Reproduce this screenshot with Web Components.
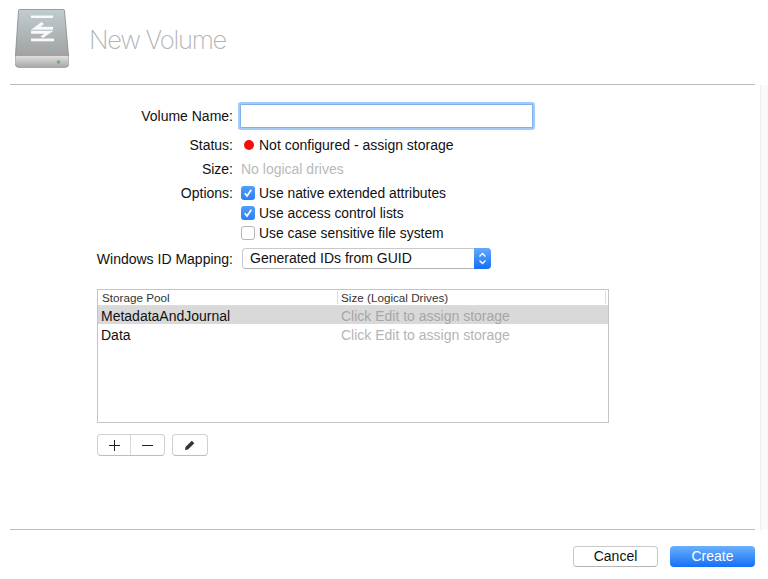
<!DOCTYPE html>
<html>
<head>
<meta charset="utf-8">
<title>New Volume</title>
<style>
  html, body { margin: 0; height: 100%; background: #fff; }
  body { font: 14px/16px "Liberation Sans", Arial, sans-serif; color: #111; overflow: hidden; }
</style>
</head>
<body>
<volume-page>
  <volume-header slot="header">New Volume</volume-header>

  <form-row label="Volume Name:" gap="9"><text-field></text-field></form-row>
  <form-row label="Status:" gap="8"><status-text>Not configured - assign storage</status-text></form-row>
  <form-row label="Size:" gap="8"><span style="color:#b9b9b9;padding-left:1px">No logical drives</span></form-row>
  <form-row label="Options:" gap="4">
    <check-box checked>Use native extended attributes</check-box>
  </form-row>
  <form-row gap="4"><check-box checked>Use access control lists</check-box></form-row>
  <form-row gap="7"><check-box>Use case sensitive file system</check-box></form-row>
  <form-row label="Windows ID Mapping:" gap="20"><popup-button>Generated IDs from GUID</popup-button></form-row>

  <pool-table></pool-table>

  <table-tools></table-tools>

  <dialog-footer slot="footer">
    <push-button>Cancel</push-button>
    <push-button primary>Create</push-button>
  </dialog-footer>
</volume-page>

<script>
function shadow(el, html) {
  el.attachShadow({ mode: 'open' }).innerHTML = html;
}

class VolumePage extends HTMLElement {
  constructor() {
    super();
    shadow(this, `
<style>
  :host { display: flex; flex-direction: column; height: 579px; position: relative; }
  main  { flex: 1; padding-top: 19px; }
  .strip {
    position: absolute; top: 85px; right: 0; width: 7px; height: 445px;
    background: #fafafa; border-left: 1px solid #eee;
  }
</style>
<slot name="header"></slot>
<main><slot></slot></main>
<slot name="footer"></slot>
<div class="strip"></div>`);
  }
}

class VolumeHeader extends HTMLElement {
  constructor() {
    super();
    shadow(this, `
<style>
  :host { display: block; height: 85px; box-sizing: border-box; margin: 0 13px 0 10px; border-bottom: 1px solid #bdbdbd; }
  .wrap { display: flex; align-items: flex-start; padding: 9px 0 0 5px; gap: 20px; }
  svg   { display: block; flex: none; }
  h1    {
    margin: 14px 0 0; font: 200 25.500px/34px Inter, "Liberation Sans", sans-serif;
    letter-spacing: -1.25px; color: #b0b4b7;
  }
</style>
<div class="wrap">
  <svg width="54" height="60" viewBox="15 9 54 60">
    <defs>
      <linearGradient id="body" x1="0" y1="0" x2="0" y2="1">
        <stop offset="0" stop-color="#c0ccd1"/><stop offset="1" stop-color="#a1a1a1"/>
      </linearGradient>
      <linearGradient id="front" x1="0" y1="0" x2="0" y2="1">
        <stop offset="0" stop-color="#e2e2e2"/><stop offset="1" stop-color="#a6a6a6"/>
      </linearGradient>
    </defs>
    <path d="M19.500 9.500H63.500Q64.400 9.500 64.500 10.500L68.600 56.500H15.400L18.500 10.500Q18.600 9.500 19.500 9.500Z" fill="url(#body)" stroke="#85898c" stroke-width=".8"/>
    <path d="M15.200 56Q15.600 55.500 17 55.500H67Q68.400 55.500 68.800 56V63.500Q68.800 67.500 65 67.500H19Q15.200 67.500 15.200 63.500Z" fill="url(#front)" stroke="#8d8d8d" stroke-width=".6"/>
    <rect x="57" y="60.500" width="3" height="3" fill="#62b562"/>
    <g fill="#f7f9fa">
      <rect x="31" y="15.500" width="22" height="2.500"/>
      <rect x="31" y="38.500" width="23" height="2.800"/>
      <path d="M41.500 22 31 29.800H53V26.800H40.500L44 24Z"/>
      <path d="M31 30.800H53.500L43 38 40.500 36.500 44.500 33.800H31Z"/>
    </g>
  </svg>
  <h1><slot></slot></h1>
</div>`);
  }
}

class FormRow extends HTMLElement {
  constructor() {
    super();
    shadow(this, `
<style>
  :host { display: flex; align-items: center; }
  .label { width: 233px; text-align: right; flex: none; white-space: nowrap; }
  .field { margin-left: 7px; display: flex; align-items: center; }
</style>
<div class="label"></div>
<div class="field"><slot></slot></div>`);
  }
  connectedCallback() {
    this.shadowRoot.querySelector('.label').textContent = this.getAttribute('label') || '';
    this.style.marginBottom = (this.getAttribute('gap') || 0) + 'px';
  }
}

class TextField extends HTMLElement {
  constructor() {
    super();
    shadow(this, `
<style>
  :host { display: block; }
  input {
    display: block; width: 293px; height: 24px; box-sizing: border-box; margin: 0;
    border: 1px solid #7fb0ec; border-radius: 1px; outline: none; background: #fff;
    box-shadow: 0 0 0 2px #a3cbf7; font: inherit;
  }
</style>
<input type="text">`);
  }
}

class StatusText extends HTMLElement {
  constructor() {
    super();
    shadow(this, `
<style>
  :host { display: flex; align-items: center; gap: 4px; padding-left: 4px; height: 16px; }
  i { width: 10px; height: 10px; border-radius: 50%; background: #f50d0d; display: block; margin-right: 1px; }
</style>
<i></i><slot></slot>`);
  }
}

class CheckBox extends HTMLElement {
  constructor() {
    super();
    const on = this.hasAttribute('checked');
    shadow(this, `
<style>
  :host { display: flex; align-items: center; gap: 4px; padding-left: 1px; height: 16px; font-size: 13.850px; }
  .box {
    width: 14px; height: 14px; box-sizing: border-box; border-radius: 3px; flex: none;
    ${on ? 'background: linear-gradient(#4f9ffb, #2a80f6); border: 0;'
         : 'background: #fff; border: 1px solid #b5b5b5;'}
  }
  svg { display: block; }
</style>
<div class="box">${on ? `<svg width="14" height="14" viewBox="0 0 14 14"><path d="M3.800 7.200 6 10 10.300 3.800" fill="none" stroke="#fff" stroke-width="1.700"/></svg>` : ''}</div>
<slot></slot>`);
  }
}

class PopupButton extends HTMLElement {
  constructor() {
    super();
    shadow(this, `
<style>
  :host {
    display: flex; width: 249px; height: 21px; box-sizing: border-box; margin-left: 2px;
    border: 1px solid #c9c9c9; border-bottom-color: #b4b4b4; border-right: 0; border-radius: 4px; background: #fff;
  }
  .text  { flex: 1; padding-left: 7px; line-height: 18px; }
  .arrow {
    width: 17px; margin: -1px 0; border-radius: 0 4px 4px 0;
    background: linear-gradient(#64a8fb, #1470f6);
    display: flex; align-items: center; justify-content: center;
  }
</style>
<div class="text"><slot></slot></div>
<div class="arrow">
  <svg width="9" height="15" viewBox="0 0 9 15"><path d="M1.500 5.500 4.500 2.500 7.500 5.500M1.500 9.500 4.500 12.500 7.500 9.500" fill="none" stroke="#fff" stroke-width="1.300"/></svg>
</div>`);
  }
}

class PoolTable extends HTMLElement {
  constructor() {
    super();
    const rows = [['MetadataAndJournal', true], ['Data', false]];
    shadow(this, `
<style>
  :host {
    display: block; width: 512px; height: 134px; box-sizing: border-box; margin-left: 97px;
    border: 1px solid #c4c4c4; background: #fff;
  }
  .head {
    display: grid; grid-template-columns: 239px 1fr; height: 16px; box-sizing: border-box;
    font-size: 11.700px; line-height: 15px; color: #333; border-bottom: 1px solid #ddd;
  }
  .head div { padding-left: 4px; }
  .head div + div { border-left: 1px solid #ddd; margin: 1px 2px 1px 0; line-height: 13px; padding-left: 3px; border-right: 1px solid #ddd; }
  .row { display: grid; grid-template-columns: 240px 1fr; height: 19px; line-height: 22px; padding-left: 3px; }
  .row.sel { background: #d9d9d9; height: 18px; line-height: 20px; }
  .hint { color: #b5b5b5; }
  .sel .hint { color: #a6a6a6; }
</style>
<div class="head"><div>Storage Pool</div><div>Size (Logical Drives)</div></div>
${rows.map(([name, sel]) => `<div class="row${sel ? ' sel' : ''}"><div>${name}</div><div class="hint">Click Edit to assign storage</div></div>`).join('')}`);
  }
}

class TableTools extends HTMLElement {
  constructor() {
    super();
    shadow(this, `
<style>
  :host { display: flex; gap: 7px; margin: 11px 0 0 97px; }
  .group {
    display: flex; height: 22px; box-sizing: border-box; background: #fff;
    border: 1px solid #d0d0d0; border-bottom-color: #bdbdbd; border-radius: 4px;
  }
  .btn { display: flex; align-items: center; justify-content: center; }
  .btn + .btn { border-left: 1px solid #d8d8d8; }
  svg { display: block; }
</style>
<div class="group">
  <div class="btn" style="width:32px"><svg width="13" height="13" viewBox="0 0 13 13"><path d="M6.500 1V12M1 6.500H12" stroke="#222" stroke-width="1" fill="none"/></svg></div>
  <div class="btn" style="width:33px"><svg width="13" height="13" viewBox="0 0 13 13"><path d="M1 6.500H12" stroke="#222" stroke-width="1" fill="none"/></svg></div>
</div>
<div class="group">
  <div class="btn" style="width:34px"><svg width="12" height="12" viewBox="0 0 12 12"><path d="M1 11 1.500 8 7.800 1.700 10.300 4.200 4 10.500Z" fill="#333"/></svg></div>
</div>`);
  }
}

class DialogFooter extends HTMLElement {
  constructor() {
    super();
    shadow(this, `
<style>
  :host {
    display: flex; justify-content: flex-end; gap: 12px; height: 50px; box-sizing: border-box;
    margin: 0 13px 0 10px; padding-top: 16px; border-top: 1px solid #bdbdbd;
  }
</style>
<slot></slot>`);
  }
}

class PushButton extends HTMLElement {
  constructor() {
    super();
    shadow(this, `
<style>
  :host {
    display: block; width: 85px; height: 21px; box-sizing: border-box; text-align: center;
    border-radius: 4px; line-height: 19px; font-size: 14px;
    background: #fff; border: 1px solid #c9c9c9; border-bottom-color: #b4b4b4; color: #111;
  }
  :host([primary]) {
    background: linear-gradient(#6cb0fb, #1470f6); border: 0; color: #fff; line-height: 21px;
  }
</style>
<slot></slot>`);
  }
}

customElements.define('volume-page', VolumePage);
customElements.define('volume-header', VolumeHeader);
customElements.define('form-row', FormRow);
customElements.define('text-field', TextField);
customElements.define('status-text', StatusText);
customElements.define('check-box', CheckBox);
customElements.define('popup-button', PopupButton);
customElements.define('pool-table', PoolTable);
customElements.define('table-tools', TableTools);
customElements.define('dialog-footer', DialogFooter);
customElements.define('push-button', PushButton);
</script>
</body>
</html>
